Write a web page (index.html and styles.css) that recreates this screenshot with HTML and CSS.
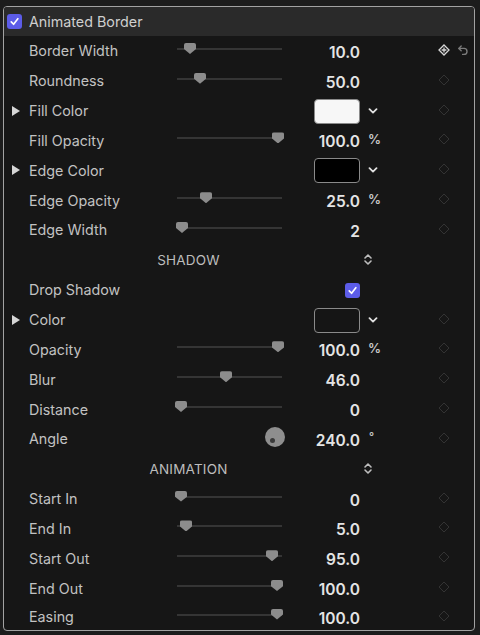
FILE: index.html
```html
<!DOCTYPE html>
<html lang="en">

<head>
    <meta charset="UTF-8">
    <meta name="viewport" content="width=device-width, initial-scale=1.0">
    <title>Animated Border</title>
    <link rel="stylesheet" href="styles.css">
</head>

<body>
    <div class="inspector">
        <div class="group-header">
            <span class="checkbox"><svg viewBox="0 0 14 14"><path d="M3.5 7.4 L6 10 L10.6 4" /></svg></span>
            <span class="group-title">Animated Border</span>
        </div>

        <div class="param">
            <span></span>
            <span class="param-label">Border Width</span>
            <div class="slider"><span class="thumb" style="left: 7px"></span></div>
            <span class="param-value">10.0</span>
            <span></span><span></span>
            <span class="keyframe active"><svg viewBox="0 0 12 12"><path d="M6 1 L11 6 L6 11 L1 6 Z" /><path d="M6 3.6 V8.4 M3.6 6 H8.4" /></svg></span>
            <span class="reset"><svg viewBox="0 0 12 12"><path d="M4.2 2 L1.8 4.4 L4.2 6.8" /><path d="M2 4.4 H7 A3 3 0 0 1 7 10.4 H5.6" /></svg></span>
        </div>

        <div class="param">
            <span></span>
            <span class="param-label">Roundness</span>
            <div class="slider"><span class="thumb" style="left: 17px"></span></div>
            <span class="param-value">50.0</span>
            <span></span><span></span>
            <span class="keyframe"><svg viewBox="0 0 12 12"><path d="M6 1 L11 6 L6 11 L1 6 Z" /></svg></span>
            <span></span>
        </div>

        <div class="param">
            <span class="disclosure"></span>
            <span class="param-label">Fill Color</span>
            <span></span>
            <span class="param-value"><span class="swatch swatch-white"></span></span>
            <span class="menu-arrow"><svg viewBox="0 0 10 6"><path d="M1.5 1.2 L5 4.6 L8.5 1.2" /></svg></span>
            <span></span>
            <span class="keyframe"><svg viewBox="0 0 12 12"><path d="M6 1 L11 6 L6 11 L1 6 Z" /></svg></span>
            <span></span>
        </div>

        <div class="param">
            <span></span>
            <span class="param-label">Fill Opacity</span>
            <div class="slider"><span class="thumb" style="left: 95px"></span></div>
            <span class="param-value">100.0</span>
            <span class="param-unit">%</span>
            <span></span>
            <span class="keyframe"><svg viewBox="0 0 12 12"><path d="M6 1 L11 6 L6 11 L1 6 Z" /></svg></span>
            <span></span>
        </div>

        <div class="param">
            <span class="disclosure"></span>
            <span class="param-label">Edge Color</span>
            <span></span>
            <span class="param-value"><span class="swatch swatch-black"></span></span>
            <span class="menu-arrow"><svg viewBox="0 0 10 6"><path d="M1.5 1.2 L5 4.6 L8.5 1.2" /></svg></span>
            <span></span>
            <span class="keyframe"><svg viewBox="0 0 12 12"><path d="M6 1 L11 6 L6 11 L1 6 Z" /></svg></span>
            <span></span>
        </div>

        <div class="param">
            <span></span>
            <span class="param-label">Edge Opacity</span>
            <div class="slider"><span class="thumb" style="left: 23px"></span></div>
            <span class="param-value">25.0</span>
            <span class="param-unit">%</span>
            <span></span>
            <span class="keyframe"><svg viewBox="0 0 12 12"><path d="M6 1 L11 6 L6 11 L1 6 Z" /></svg></span>
            <span></span>
        </div>

        <div class="param">
            <span></span>
            <span class="param-label">Edge Width</span>
            <div class="slider"><span class="thumb" style="left: -1px"></span></div>
            <span class="param-value">2</span>
            <span></span><span></span>
            <span class="keyframe"><svg viewBox="0 0 12 12"><path d="M6 1 L11 6 L6 11 L1 6 Z" /></svg></span>
            <span></span>
        </div>

        <div class="param section">
            <span></span>
            <span class="section-title">SHADOW</span>
            <span class="stepper"><svg viewBox="0 0 10 13"><path d="M2 5 L5 2 L8 5 M2 8 L5 11 L8 8" /></svg></span>
        </div>

        <div class="param">
            <span></span>
            <span class="param-label">Drop Shadow</span>
            <span></span>
            <span class="param-value"><span class="checkbox small"><svg viewBox="0 0 14 14"><path d="M3.5 7.4 L6 10 L10.6 4" /></svg></span></span>
            <span></span><span></span><span></span><span></span>
        </div>

        <div class="param">
            <span class="disclosure"></span>
            <span class="param-label">Color</span>
            <span></span>
            <span class="param-value"><span class="swatch swatch-dark"></span></span>
            <span class="menu-arrow"><svg viewBox="0 0 10 6"><path d="M1.5 1.2 L5 4.6 L8.5 1.2" /></svg></span>
            <span></span>
            <span class="keyframe"><svg viewBox="0 0 12 12"><path d="M6 1 L11 6 L6 11 L1 6 Z" /></svg></span>
            <span></span>
        </div>

        <div class="param">
            <span></span>
            <span class="param-label">Opacity</span>
            <div class="slider"><span class="thumb" style="left: 95px"></span></div>
            <span class="param-value">100.0</span>
            <span class="param-unit">%</span>
            <span></span>
            <span class="keyframe"><svg viewBox="0 0 12 12"><path d="M6 1 L11 6 L6 11 L1 6 Z" /></svg></span>
            <span></span>
        </div>

        <div class="param">
            <span></span>
            <span class="param-label">Blur</span>
            <div class="slider"><span class="thumb" style="left: 43px"></span></div>
            <span class="param-value">46.0</span>
            <span></span><span></span>
            <span class="keyframe"><svg viewBox="0 0 12 12"><path d="M6 1 L11 6 L6 11 L1 6 Z" /></svg></span>
            <span></span>
        </div>

        <div class="param">
            <span></span>
            <span class="param-label">Distance</span>
            <div class="slider"><span class="thumb" style="left: -2px"></span></div>
            <span class="param-value">0</span>
            <span></span><span></span>
            <span class="keyframe"><svg viewBox="0 0 12 12"><path d="M6 1 L11 6 L6 11 L1 6 Z" /></svg></span>
            <span></span>
        </div>

        <div class="param">
            <span></span>
            <span class="param-label">Angle</span>
            <div class="dial-cell"><span class="dial"><span class="dial-dot"></span></span></div>
            <span class="param-value">240.0</span>
            <span class="param-unit degree">°</span>
            <span></span>
            <span class="keyframe"><svg viewBox="0 0 12 12"><path d="M6 1 L11 6 L6 11 L1 6 Z" /></svg></span>
            <span></span>
        </div>

        <div class="param section">
            <span></span>
            <span class="section-title">ANIMATION</span>
            <span class="stepper"><svg viewBox="0 0 10 13"><path d="M2 5 L5 2 L8 5 M2 8 L5 11 L8 8" /></svg></span>
        </div>

        <div class="param">
            <span></span>
            <span class="param-label">Start In</span>
            <div class="slider"><span class="thumb" style="left: -2px"></span></div>
            <span class="param-value">0</span>
            <span></span><span></span>
            <span class="keyframe"><svg viewBox="0 0 12 12"><path d="M6 1 L11 6 L6 11 L1 6 Z" /></svg></span>
            <span></span>
        </div>

        <div class="param">
            <span></span>
            <span class="param-label">End In</span>
            <div class="slider"><span class="thumb" style="left: 3px"></span></div>
            <span class="param-value">5.0</span>
            <span></span><span></span>
            <span class="keyframe"><svg viewBox="0 0 12 12"><path d="M6 1 L11 6 L6 11 L1 6 Z" /></svg></span>
            <span></span>
        </div>

        <div class="param">
            <span></span>
            <span class="param-label">Start Out</span>
            <div class="slider"><span class="thumb" style="left: 89px"></span></div>
            <span class="param-value">95.0</span>
            <span></span><span></span>
            <span class="keyframe"><svg viewBox="0 0 12 12"><path d="M6 1 L11 6 L6 11 L1 6 Z" /></svg></span>
            <span></span>
        </div>

        <div class="param">
            <span></span>
            <span class="param-label">End Out</span>
            <div class="slider"><span class="thumb" style="left: 94px"></span></div>
            <span class="param-value">100.0</span>
            <span></span><span></span>
            <span class="keyframe"><svg viewBox="0 0 12 12"><path d="M6 1 L11 6 L6 11 L1 6 Z" /></svg></span>
            <span></span>
        </div>

        <div class="param last">
            <span></span>
            <span class="param-label">Easing</span>
            <div class="slider"><span class="thumb" style="left: 94px"></span></div>
            <span class="param-value">100.0</span>
            <span></span><span></span>
            <span class="keyframe"><svg viewBox="0 0 12 12"><path d="M6 1 L11 6 L6 11 L1 6 Z" /></svg></span>
            <span></span>
        </div>
    </div>
</body>

</html>
```

FILE: styles.css
```css
* {
    margin: 0;
    padding: 0;
    box-sizing: border-box;
}

body {
    font-family: 'Inter', 'Liberation Sans', sans-serif;
    background: #1c1c1c;
    width: 480px;
    height: 635px;
    overflow: hidden;
}

.inspector {
    margin: 6px 5px 0 3px;
    height: 625px;
    border: 1px solid #a2a2a2;
    border-radius: 4px;
    background: #161616;
    overflow: hidden;
}

/* group header with the enable checkbox */
.group-header {
    display: flex;
    align-items: center;
    height: 29px;
    background: #2a2a2a;
    padding-left: 3px;
}

.group-title {
    margin-left: 7px;
    font-size: 14.3px;
    color: #cfcfcf;
}

.checkbox {
    display: inline-flex;
    align-items: center;
    justify-content: center;
    width: 15px;
    height: 15px;
    border-radius: 3px;
    background: #5c5ce8;
}

.checkbox svg {
    width: 13px;
    height: 13px;
    fill: none;
    stroke: #ffffff;
    stroke-width: 1.8;
    stroke-linecap: round;
    stroke-linejoin: round;
}

.checkbox.small {
    margin-top: -2px;
}

/* parameter rows */
.param {
    display: grid;
    grid-template-columns: 25px 143px 118px 70px 24px 1fr 16px 22px;
    align-items: center;
    height: 29.85px;
}

.param.last {
    height: 27px;
}

.param-label {
    font-size: 14.3px;
    color: #c2c2c2;
    white-space: nowrap;
}

.param-value {
    display: flex;
    justify-content: flex-end;
    align-items: center;
    padding-top: 3px;
    font-size: 15.5px;
    font-weight: 600;
    color: #e4e4e4;
}

.param-unit {
    padding-left: 8px;
    font-size: 13px;
    font-weight: 600;
    color: #c8c8c8;
    margin-bottom: 2px;
}

.param-unit.degree {
    padding-left: 9px;
    font-size: 11px;
    margin-bottom: 6px;
}

.disclosure {
    width: 0;
    height: 0;
    margin-left: 8px;
    border-top: 5px solid transparent;
    border-bottom: 5px solid transparent;
    border-left: 8px solid #d6d6d6;
}

/* slider */
.slider {
    position: relative;
    height: 12px;
    margin: 0 8px 4px 5px;
}

.slider::before {
    content: '';
    display: block;
    margin-top: 5px;
    height: 2px;
    background: #353535;
}

.thumb {
    position: absolute;
    top: 0;
    width: 12px;
    height: 11px;
    background: #8c8c8c;
    border-radius: 2px 2px 0 0;
    clip-path: polygon(0 0, 100% 0, 100% 55%, 50% 100%, 0 55%);
}

/* angle dial */
.dial-cell {
    display: flex;
    padding-left: 93px;
    margin-bottom: 3px;
}

.dial {
    position: relative;
    width: 20px;
    height: 20px;
    border-radius: 50%;
    background: #8e8e8e;
}

.dial-dot {
    position: absolute;
    left: 4.5px;
    top: 10.5px;
    width: 5px;
    height: 5px;
    border-radius: 50%;
    background: #3a3a3a;
}

/* colour wells */
.swatch {
    display: block;
    width: 46px;
    height: 25px;
    border: 1.5px solid #8a8a8a;
    border-radius: 4px;
    margin-bottom: 2px;
}

.swatch-white {
    background: #f7f7f7;
}

.swatch-black {
    background: #000000;
}

.swatch-dark {
    background: #151515;
}

.menu-arrow,
.stepper {
    display: flex;
    padding-left: 8px;
}

.menu-arrow svg {
    width: 10px;
    height: 6px;
    fill: none;
    stroke: #e0e0e0;
    stroke-width: 1.8;
    stroke-linecap: round;
    stroke-linejoin: round;
}

/* section dividers */
.section {
    grid-template-columns: 25px 322px 30px;
}

.section-title {
    text-align: center;
    padding-right: 3px;
    font-size: 13.5px;
    letter-spacing: 0.2px;
    color: #bdbdbd;
}

.stepper {
    padding-left: 12px;
}

.stepper svg {
    width: 10px;
    height: 13px;
    fill: none;
    stroke: #bdbdbd;
    stroke-width: 1.6;
    stroke-linecap: round;
    stroke-linejoin: round;
}

/* keyframe and reset buttons */
.keyframe,
.reset {
    display: flex;
    justify-content: center;
    margin-bottom: 2px;
}

.keyframe svg {
    width: 12px;
    height: 12px;
    fill: none;
    stroke: #333333;
    stroke-width: 1;
}

.keyframe.active svg {
    stroke: #d8d8d8;
    stroke-width: 1.3;
}

.reset svg {
    width: 12px;
    height: 12px;
    fill: none;
    stroke: #7a7a7a;
    stroke-width: 1.4;
    stroke-linecap: round;
    stroke-linejoin: round;
}
```
